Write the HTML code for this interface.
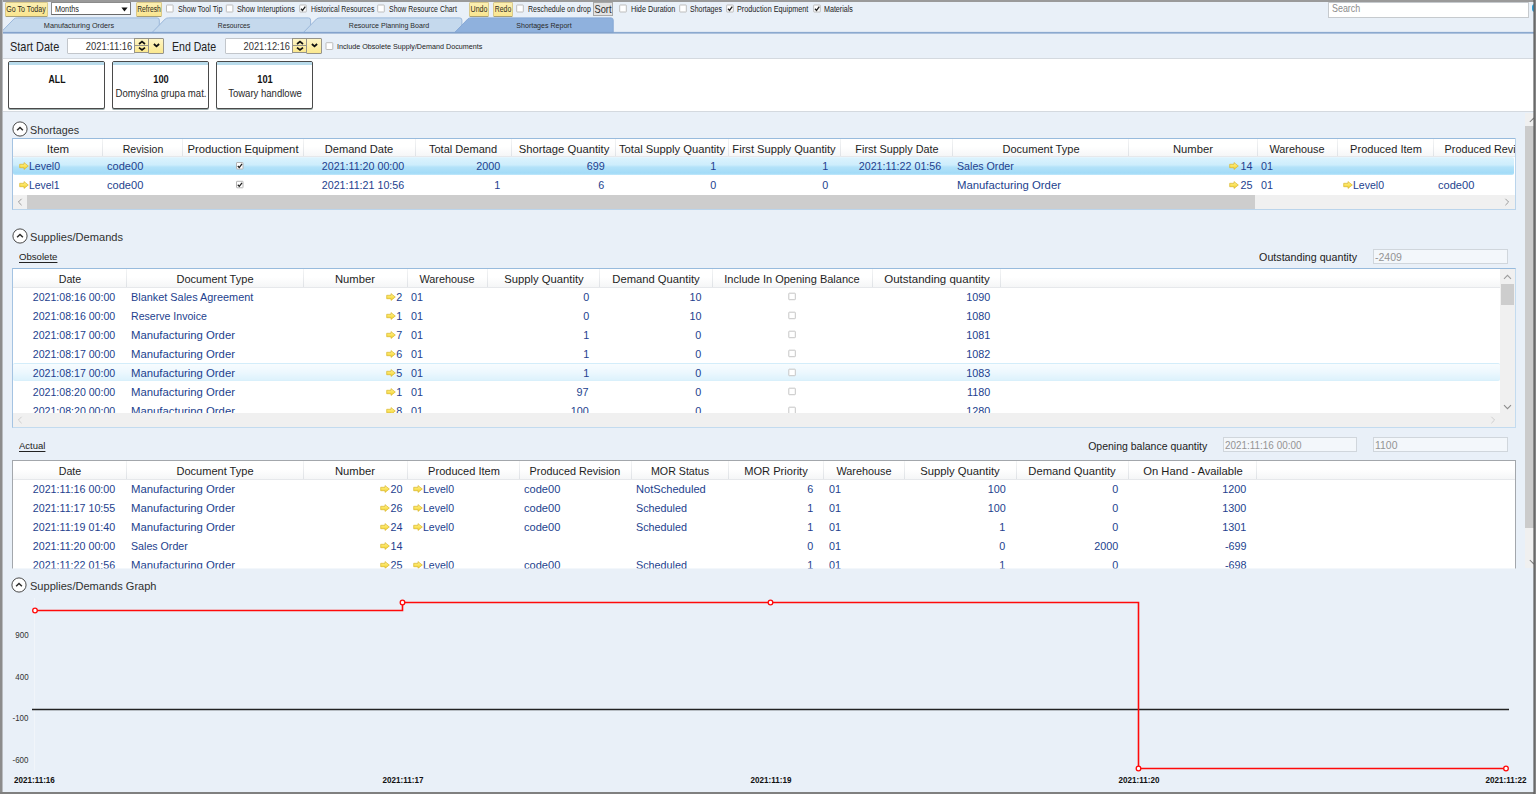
<!DOCTYPE html>
<html lang="en"><head><meta charset="utf-8"><title>Shortages Report</title>
<style>
html,body{margin:0;padding:0;background:#e9f0f8;}
body{width:1536px;height:794px;overflow:hidden;font-family:"Liberation Sans",sans-serif;}
#root{position:relative;width:1536px;height:794px;overflow:hidden;}
#root div,#root svg.ab,#root svg.ar{position:absolute;}
.t{position:absolute;white-space:nowrap;display:inline-block;line-height:16px;}
.cb{background:#fff;border:1px solid #b0b0b0;box-sizing:border-box;border-radius:1px;}
</style></head>
<body>
<div id="root">
<svg width="0" height="0" style="position:absolute"><defs><linearGradient id="ag" x1="0" y1="0" x2="0" y2="1"><stop offset="0" stop-color="#fff3a0"/><stop offset="0.5" stop-color="#fbe35a"/><stop offset="1" stop-color="#f1d03a"/></linearGradient></defs></svg>
<div style="left:2px;top:2px;width:1532px;height:790px;background:#e9f0f8;"></div>
<div style="left:5px;top:2px;width:42.5px;height:15.4px;background:linear-gradient(#fcefb2,#fae58e);border:1px solid #d9c98a;border-bottom-color:#a79f78;border-radius:1.5px;box-sizing:border-box;"></div>
<span class="t" style="top:1.2px;font-size:8.5px;color:#2e2c22;left:26.25px;transform:translateX(-50%) scaleX(0.830);">Go To Today</span>
<div style="left:51px;top:2px;width:80px;height:13px;background:#fff;border:1px solid #8c8c8c;border-right-color:#7a7a7a;border-bottom-color:#6a6a6a;border-bottom-width:1.5px;box-sizing:border-box;"></div>
<span class="t" style="top:1.6px;font-size:8.2px;color:#222;left:54.631px;transform-origin:0 50%;transform:scaleX(0.889);">Months</span>
<svg class="ab" style="left:121px;top:6.5px" width="7" height="5" viewBox="0 0 7 5"><path d="M0.4 0.6 H6.6 L3.5 4.4 Z" fill="#111"/></svg>
<div style="left:136px;top:2px;width:26px;height:15.4px;background:linear-gradient(#fcefb2,#fae58e);border:1px solid #d9c98a;border-bottom-color:#a79f78;border-radius:1.5px;box-sizing:border-box;"></div>
<span class="t" style="top:1.2px;font-size:8.5px;color:#2e2c22;left:149px;transform:translateX(-50%) scaleX(0.796);">Refresh</span>
<svg class="ab" style="left:166px;top:4px" width="9" height="10" viewBox="0 0 9 10"><rect x="0.5" y="1" width="6.6" height="7" rx="0.4" fill="#fff" stroke="#bdbdbd" stroke-width="1"/></svg>
<span class="t" style="top:1.3px;font-size:8.5px;color:#222;left:177.618px;transform-origin:0 50%;transform:scaleX(0.841);">Show Tool Tip</span>
<svg class="ab" style="left:225px;top:4px" width="10" height="10" viewBox="0 0 10 10"><rect x="1.3" y="1" width="6.6" height="7" rx="0.4" fill="#fff" stroke="#bdbdbd" stroke-width="1"/></svg>
<span class="t" style="top:1.3px;font-size:8.5px;color:#222;left:237.118px;transform-origin:0 50%;transform:scaleX(0.851);">Show Interuptions</span>
<svg class="ab" style="left:299px;top:4px" width="9" height="10" viewBox="0 0 9 10"><rect x="0.7" y="1" width="6.6" height="7" rx="0.4" fill="#fff" stroke="#bdbdbd" stroke-width="1"/><path d="M2.00 4.70 L3.52 6.40 L6.28 2.60" fill="none" stroke="#222" stroke-width="1.3"/></svg>
<span class="t" style="top:1.3px;font-size:8.5px;color:#222;left:310.618px;transform-origin:0 50%;transform:scaleX(0.813);">Historical Resources</span>
<svg class="ab" style="left:377px;top:4px" width="9" height="10" viewBox="0 0 9 10"><rect x="0.7" y="1" width="6.6" height="7" rx="0.4" fill="#fff" stroke="#bdbdbd" stroke-width="1"/></svg>
<span class="t" style="top:1.3px;font-size:8.5px;color:#222;left:388.618px;transform-origin:0 50%;transform:scaleX(0.816);">Show Resource Chart</span>
<div style="left:469px;top:2px;width:19.5px;height:15.4px;background:linear-gradient(#fcefb2,#fae58e);border:1px solid #d9c98a;border-bottom-color:#a79f78;border-radius:1.5px;box-sizing:border-box;"></div>
<span class="t" style="top:1.2px;font-size:8.5px;color:#2e2c22;left:478.75px;transform:translateX(-50%) scaleX(0.830);">Undo</span>
<div style="left:493.4px;top:2px;width:19.3px;height:15.4px;background:linear-gradient(#fcefb2,#fae58e);border:1px solid #d9c98a;border-bottom-color:#a79f78;border-radius:1.5px;box-sizing:border-box;"></div>
<span class="t" style="top:1.2px;font-size:8.5px;color:#2e2c22;left:503.05px;transform:translateX(-50%) scaleX(0.806);">Redo</span>
<svg class="ab" style="left:516px;top:4px" width="9" height="10" viewBox="0 0 9 10"><rect x="0.7" y="1" width="6.6" height="7" rx="0.4" fill="#fff" stroke="#bdbdbd" stroke-width="1"/></svg>
<span class="t" style="top:1.3px;font-size:8.5px;color:#222;left:527.617px;transform-origin:0 50%;transform:scaleX(0.826);">Reschedule on drop</span>
<div style="left:593px;top:2px;width:20px;height:14px;background:#e3e3e3;border:1px solid #a9a9a9;box-sizing:border-box;"></div>
<span class="t" style="top:2px;font-size:10.2px;color:#2c2c2c;left:603px;transform:translateX(-50%) scaleX(0.908);">Sort</span>
<svg class="ab" style="left:619px;top:4px" width="9" height="10" viewBox="0 0 9 10"><rect x="0.7" y="1" width="6.6" height="7" rx="0.4" fill="#fff" stroke="#bdbdbd" stroke-width="1"/></svg>
<span class="t" style="top:1.3px;font-size:8.5px;color:#222;left:630.617px;transform-origin:0 50%;transform:scaleX(0.854);">Hide Duration</span>
<svg class="ab" style="left:679px;top:4px" width="9" height="10" viewBox="0 0 9 10"><rect x="0.7" y="1" width="6.6" height="7" rx="0.4" fill="#fff" stroke="#bdbdbd" stroke-width="1"/></svg>
<span class="t" style="top:1.3px;font-size:8.5px;color:#222;left:690.117px;transform-origin:0 50%;transform:scaleX(0.823);">Shortages</span>
<svg class="ab" style="left:726px;top:4px" width="9" height="10" viewBox="0 0 9 10"><rect x="0.7" y="1" width="6.6" height="7" rx="0.4" fill="#fff" stroke="#bdbdbd" stroke-width="1"/><path d="M2.01 4.70 L3.53 6.40 L6.28 2.60" fill="none" stroke="#222" stroke-width="1.3"/></svg>
<span class="t" style="top:1.3px;font-size:8.5px;color:#222;left:737.117px;transform-origin:0 50%;transform:scaleX(0.853);">Production Equipment</span>
<svg class="ab" style="left:813px;top:4px" width="9" height="10" viewBox="0 0 9 10"><rect x="0.7" y="1" width="6.6" height="7" rx="0.4" fill="#fff" stroke="#bdbdbd" stroke-width="1"/><path d="M2.01 4.70 L3.53 6.40 L6.28 2.60" fill="none" stroke="#222" stroke-width="1.3"/></svg>
<span class="t" style="top:1.3px;font-size:8.5px;color:#222;left:824.117px;transform-origin:0 50%;transform:scaleX(0.838);">Materials</span>
<div style="left:1328px;top:2px;width:201px;height:15.7px;background:#fff;border:1px solid #c6cace;box-sizing:border-box;"></div>
<span class="t" style="top:1.2px;font-size:10.2px;color:#8c8c8c;left:1331.54px;transform-origin:0 50%;transform:scaleX(0.875);">Search</span>
<div style="left:1532px;top:4px;width:6px;height:8px;background:#2a9fd8;border-radius:4px;"></div>
<svg class="ab" style="left:0;top:17px" width="1536" height="17" viewBox="0 0 1536 17"><path d="M0.7 15.6 L13.9 2 Q15.1 0.9 17.3 0.9 H157.1 Q159.3 0.9 159.3 3.1 V15.6 Z" fill="#c5d9ed" stroke="#9ab7da" stroke-width="1"/><path d="M152 15.6 L165.2 2 Q166.4 0.9 168.6 0.9 H308.4 Q310.6 0.9 310.6 3.1 V15.6 Z" fill="#c5d9ed" stroke="#9ab7da" stroke-width="1"/><path d="M303.3 15.6 L316.5 2 Q317.7 0.9 319.9 0.9 H459.7 Q461.9 0.9 461.9 3.1 V15.6 Z" fill="#c5d9ed" stroke="#9ab7da" stroke-width="1"/><path d="M454.6 15.6 L467.8 2 Q469 0.9 471.2 0.9 H611 Q613.2 0.9 613.2 3.1 V15.6 Z" fill="#8fb1dd" stroke="#86a8d6" stroke-width="1"/><rect x="2" y="14.9" width="1532" height="1" fill="#7f9fc9"/><rect x="2" y="15.9" width="1532" height="0.9" fill="#9db6d6"/></svg>
<span class="t" style="top:17.5px;font-size:7.8px;color:#2a2a2a;left:78.5px;transform:translateX(-50%) scaleX(0.933);">Manufacturing Orders</span>
<span class="t" style="top:17.5px;font-size:7.8px;color:#2a2a2a;left:233.5px;transform:translateX(-50%) scaleX(0.868);">Resources</span>
<span class="t" style="top:17.5px;font-size:7.8px;color:#2a2a2a;left:388.5px;transform:translateX(-50%) scaleX(0.904);">Resource Planning Board</span>
<span class="t" style="top:17.5px;font-size:7.8px;color:#2a2a2a;left:544px;transform:translateX(-50%) scaleX(0.906);">Shortages Report</span>
<span class="t" style="top:38.7px;font-size:12.2px;color:#222;left:9.951px;transform-origin:0 50%;transform:scaleX(0.897);">Start Date</span>
<div style="left:67px;top:37.5px;width:68px;height:16px;background:#fff;border:1px solid #c2c6cb;box-sizing:border-box;border-radius:1px;"></div>
<span class="t" style="top:38.2px;font-size:10.6px;color:#333;right:1403.92px;transform-origin:100% 50%;transform:scaleX(0.890);">2021:11:16</span>
<div style="left:134px;top:38px;width:14.5px;height:15.2px;background:linear-gradient(#fff6c6,#fbe88e);border:1px solid #96948a;box-sizing:border-box;"></div>
<div style="left:134.5px;top:45px;width:13.5px;height:1px;background:#96948a;"></div>
<svg class="ab" style="left:137.5px;top:40px" width="8" height="12" viewBox="0 0 8 12"><path d="M1 4 L4 1.6 L7 4" fill="none" stroke="#111" stroke-width="1.7"/><path d="M1 7.6 L4 10 L7 7.6" fill="none" stroke="#111" stroke-width="1.7"/></svg>
<div style="left:148.2px;top:37.5px;width:15.5px;height:16px;background:linear-gradient(#fff6c6,#fbe88e);border:1px solid #96948a;box-sizing:border-box;border-radius:1px;"></div>
<svg class="ab" style="left:152.6px;top:43.4px" width="7" height="5" viewBox="0 0 7 5"><path d="M0.9 1 L3.5 3.4 L6.1 1" fill="none" stroke="#111" stroke-width="1.8"/></svg>
<span class="t" style="top:38.7px;font-size:12.2px;color:#222;left:171.951px;transform-origin:0 50%;transform:scaleX(0.867);">End Date</span>
<div style="left:225px;top:37.5px;width:68px;height:16px;background:#fff;border:1px solid #c2c6cb;box-sizing:border-box;border-radius:1px;"></div>
<span class="t" style="top:38.2px;font-size:10.6px;color:#333;right:1245.92px;transform-origin:100% 50%;transform:scaleX(0.876);">2021:12:16</span>
<div style="left:292px;top:38px;width:14.5px;height:15.2px;background:linear-gradient(#fff6c6,#fbe88e);border:1px solid #96948a;box-sizing:border-box;"></div>
<div style="left:292.5px;top:45px;width:13.5px;height:1px;background:#96948a;"></div>
<svg class="ab" style="left:295.5px;top:40px" width="8" height="12" viewBox="0 0 8 12"><path d="M1 4 L4 1.6 L7 4" fill="none" stroke="#111" stroke-width="1.7"/><path d="M1 7.6 L4 10 L7 7.6" fill="none" stroke="#111" stroke-width="1.7"/></svg>
<div style="left:306.2px;top:37.5px;width:15.5px;height:16px;background:linear-gradient(#fff6c6,#fbe88e);border:1px solid #96948a;box-sizing:border-box;border-radius:1px;"></div>
<svg class="ab" style="left:310.6px;top:43.4px" width="7" height="5" viewBox="0 0 7 5"><path d="M0.9 1 L3.5 3.4 L6.1 1" fill="none" stroke="#111" stroke-width="1.8"/></svg>
<svg class="ab" style="left:325px;top:42px" width="10" height="10" viewBox="0 0 10 10"><rect x="1" y="0.7" width="6.8" height="6.8" rx="0.4" fill="#fff" stroke="#bdbdbd" stroke-width="1"/></svg>
<span class="t" style="top:38.5px;font-size:8px;color:#222;left:336.64px;transform-origin:0 50%;transform:scaleX(0.898);">Include Obsolete Supply/Demand Documents</span>
<div style="left:2px;top:58px;width:1532px;height:54px;background:#fff;border-top:1px solid #d4d9df;border-bottom:1px solid #d4d9df;box-sizing:border-box;"></div>
<div style="left:8px;top:61px;width:97px;height:48px;background:#fff;border:1px solid #4a4a4a;border-radius:2px;box-sizing:border-box;box-shadow:0 1px 0 #9aa;overflow:hidden;"><div style="position:absolute;left:0;top:0;width:100%;height:3px;background:#b9dcec"></div></div>
<span class="t" style="top:71.5px;font-size:10.1px;color:#111;font-weight:bold;left:56.5px;transform:translateX(-50%) scaleX(0.859);">ALL</span>
<div style="left:112px;top:61px;width:97px;height:48px;background:#fff;border:1px solid #4a4a4a;border-radius:2px;box-sizing:border-box;box-shadow:0 1px 0 #9aa;overflow:hidden;"><div style="position:absolute;left:0;top:0;width:100%;height:3px;background:#b9dcec"></div></div>
<span class="t" style="top:71.5px;font-size:10.1px;color:#111;font-weight:bold;left:160.5px;transform:translateX(-50%) scaleX(0.918);">100</span>
<span class="t" style="top:85.9px;font-size:10px;color:#2a2a2a;left:160.5px;transform:translateX(-50%) scaleX(0.957);">Domyślna grupa mat.</span>
<div style="left:216px;top:61px;width:97px;height:48px;background:#fff;border:1px solid #4a4a4a;border-radius:2px;box-sizing:border-box;box-shadow:0 1px 0 #9aa;overflow:hidden;"><div style="position:absolute;left:0;top:0;width:100%;height:3px;background:#b9dcec"></div></div>
<span class="t" style="top:71.5px;font-size:10.1px;color:#111;font-weight:bold;left:264.5px;transform:translateX(-50%) scaleX(0.918);">101</span>
<span class="t" style="top:85.9px;font-size:10px;color:#2a2a2a;left:264.5px;transform:translateX(-50%) scaleX(0.954);">Towary handlowe</span>
<svg class="ab" style="left:11.6px;top:121.3px" width="16" height="16" viewBox="0 0 16 16"><circle cx="8" cy="8" r="7.1" fill="#fff" stroke="#4a4a4a" stroke-width="1"/><path d="M5.1 9.3 L8 6.5 L10.9 9.3" fill="none" stroke="#2a2a2a" stroke-width="1.5"/></svg>
<span class="t" style="top:121.8px;font-size:11.3px;color:#303030;left:30.2915px;transform-origin:0 50%;transform:scaleX(0.952);">Shortages</span>
<div style="left:12px;top:138px;width:1504px;height:72px;background:#fff;border:1px solid #98bbdd;border-left-color:#a4c3e2;border-right-color:#bad4eb;border-bottom-color:#bad4eb;box-sizing:border-box;"></div>
<div style="left:13px;top:139px;width:1502px;height:18px;background:linear-gradient(#ffffff 0%,#ffffff 45%,#f5f6f7 100%);border-bottom:1px solid #e6e8eb;box-sizing:border-box;"></div>
<div style="left:102px;top:139px;width:1px;height:17px;background:linear-gradient(#f3f4f5,#dfe2e6);"></div>
<span class="t" style="top:140.6px;font-size:11.3px;color:#1e1e1e;left:57.75px;transform:translateX(-50%) scaleX(1.015);">Item</span>
<div style="left:182px;top:139px;width:1px;height:17px;background:linear-gradient(#f3f4f5,#dfe2e6);"></div>
<span class="t" style="top:140.6px;font-size:11.3px;color:#1e1e1e;left:142.5px;transform:translateX(-50%) scaleX(0.935);">Revision</span>
<div style="left:302.5px;top:139px;width:1px;height:17px;background:linear-gradient(#f3f4f5,#dfe2e6);"></div>
<span class="t" style="top:140.6px;font-size:11.3px;color:#1e1e1e;left:242.75px;transform:translateX(-50%) scaleX(0.999);">Production Equipment</span>
<div style="left:414.5px;top:139px;width:1px;height:17px;background:linear-gradient(#f3f4f5,#dfe2e6);"></div>
<span class="t" style="top:140.6px;font-size:11.3px;color:#1e1e1e;left:359px;transform:translateX(-50%) scaleX(0.983);">Demand Date</span>
<div style="left:511px;top:139px;width:1px;height:17px;background:linear-gradient(#f3f4f5,#dfe2e6);"></div>
<span class="t" style="top:140.6px;font-size:11.3px;color:#1e1e1e;left:463.25px;transform:translateX(-50%) scaleX(0.979);">Total Demand</span>
<div style="left:615px;top:139px;width:1px;height:17px;background:linear-gradient(#f3f4f5,#dfe2e6);"></div>
<span class="t" style="top:140.6px;font-size:11.3px;color:#1e1e1e;left:563.5px;transform:translateX(-50%) scaleX(0.994);">Shortage Quantity</span>
<div style="left:727.5px;top:139px;width:1px;height:17px;background:linear-gradient(#f3f4f5,#dfe2e6);"></div>
<span class="t" style="top:140.6px;font-size:11.3px;color:#1e1e1e;left:671.75px;transform:translateX(-50%) scaleX(0.993);">Total Supply Quantity</span>
<div style="left:840px;top:139px;width:1px;height:17px;background:linear-gradient(#f3f4f5,#dfe2e6);"></div>
<span class="t" style="top:140.6px;font-size:11.3px;color:#1e1e1e;left:784.25px;transform:translateX(-50%) scaleX(0.985);">First Supply Quantity</span>
<div style="left:952px;top:139px;width:1px;height:17px;background:linear-gradient(#f3f4f5,#dfe2e6);"></div>
<span class="t" style="top:140.6px;font-size:11.3px;color:#1e1e1e;left:896.5px;transform:translateX(-50%) scaleX(0.961);">First Supply Date</span>
<div style="left:1128px;top:139px;width:1px;height:17px;background:linear-gradient(#f3f4f5,#dfe2e6);"></div>
<span class="t" style="top:140.6px;font-size:11.3px;color:#1e1e1e;left:1040.5px;transform:translateX(-50%) scaleX(0.977);">Document Type</span>
<div style="left:1256.5px;top:139px;width:1px;height:17px;background:linear-gradient(#f3f4f5,#dfe2e6);"></div>
<span class="t" style="top:140.6px;font-size:11.3px;color:#1e1e1e;left:1192.75px;transform:translateX(-50%) scaleX(0.996);">Number</span>
<div style="left:1337px;top:139px;width:1px;height:17px;background:linear-gradient(#f3f4f5,#dfe2e6);"></div>
<span class="t" style="top:140.6px;font-size:11.3px;color:#1e1e1e;left:1297.25px;transform:translateX(-50%) scaleX(0.961);">Warehouse</span>
<div style="left:1433px;top:139px;width:1px;height:17px;background:linear-gradient(#f3f4f5,#dfe2e6);"></div>
<span class="t" style="top:140.6px;font-size:11.3px;color:#1e1e1e;left:1385.5px;transform:translateX(-50%) scaleX(0.977);">Produced Item</span>
<div style="left:1546.5px;top:139px;width:1px;height:17px;background:linear-gradient(#f3f4f5,#dfe2e6);"></div>
<span class="t" style="top:140.6px;font-size:11.3px;color:#1e1e1e;left:1490.25px;transform:translateX(-50%) scaleX(0.957);">Produced Revision</span>
<div style="left:13px;top:157px;width:1501px;height:18px;background:linear-gradient(#e8f7fe 0%,#daf2fd 8%,#cdedfc 44%,#b3e2f9 56%,#a2dbf7 90%,#c2e8fa 100%);border-radius:2px;"></div>
<svg class="ar" style="left:19px;top:162px" width="10" height="8" viewBox="0 0 10 8"><path d="M0.7 2.3 H5 V0.6 L9.3 4 L5 7.4 V5.7 H0.7 Z" fill="url(#ag)" stroke="#d9b62a" stroke-width="0.7" stroke-linejoin="round"/></svg>
<span class="t" style="top:158.4px;font-size:11.3px;color:#233f8e;left:29.4915px;transform-origin:0 50%;transform:scaleX(0.931);">Level0</span>
<span class="t" style="top:158.4px;font-size:11.3px;color:#233f8e;left:106.992px;transform-origin:0 50%;transform:scaleX(0.980);">code00</span>
<svg class="ab" style="left:236px;top:162px" width="9" height="9" viewBox="0 0 9 9"><rect x="0.5" y="0.5" width="6.5" height="6.5" rx="0.4" fill="#fff" stroke="#b4b4b4" stroke-width="1"/><path d="M1.78 3.94 L3.28 5.53 L6.00 1.97" fill="none" stroke="#222" stroke-width="1.3"/></svg>
<span class="t" style="top:158.4px;font-size:11.3px;color:#233f8e;left:362.5px;transform:translateX(-50%) scaleX(0.947);">2021:11:20 00:00</span>
<span class="t" style="top:158.4px;font-size:11.3px;color:#233f8e;right:1035.69px;transform-origin:100% 50%;transform:scaleX(0.955);">2000</span>
<span class="t" style="top:158.4px;font-size:11.3px;color:#233f8e;right:931.491px;transform-origin:100% 50%;transform:scaleX(0.955);">699</span>
<span class="t" style="top:158.4px;font-size:11.3px;color:#233f8e;right:819.991px;transform-origin:100% 50%;transform:scaleX(0.955);">1</span>
<span class="t" style="top:158.4px;font-size:11.3px;color:#233f8e;right:707.491px;transform-origin:100% 50%;transform:scaleX(0.955);">1</span>
<span class="t" style="top:158.4px;font-size:11.3px;color:#233f8e;left:899.5px;transform:translateX(-50%) scaleX(0.947);">2021:11:22 01:56</span>
<span class="t" style="top:158.4px;font-size:11.3px;color:#233f8e;left:956.991px;transform-origin:0 50%;transform:scaleX(0.942);">Sales Order</span>
<span class="t" style="top:158.4px;font-size:11.3px;color:#233f8e;right:283.491px;transform-origin:100% 50%;transform:scaleX(0.955);">14</span>
<svg class="ar" style="left:1229.3px;top:162px" width="10" height="8" viewBox="0 0 10 8"><path d="M0.7 2.3 H5 V0.6 L9.3 4 L5 7.4 V5.7 H0.7 Z" fill="url(#ag)" stroke="#d9b62a" stroke-width="0.7" stroke-linejoin="round"/></svg>
<span class="t" style="top:158.4px;font-size:11.3px;color:#233f8e;left:1261.49px;transform-origin:0 50%;transform:scaleX(0.955);">01</span>
<svg class="ar" style="left:19px;top:180.8px" width="10" height="8" viewBox="0 0 10 8"><path d="M0.7 2.3 H5 V0.6 L9.3 4 L5 7.4 V5.7 H0.7 Z" fill="url(#ag)" stroke="#d9b62a" stroke-width="0.7" stroke-linejoin="round"/></svg>
<span class="t" style="top:177.2px;font-size:11.3px;color:#233f8e;left:29.4915px;transform-origin:0 50%;transform:scaleX(0.916);">Level1</span>
<span class="t" style="top:177.2px;font-size:11.3px;color:#233f8e;left:106.992px;transform-origin:0 50%;transform:scaleX(0.980);">code00</span>
<svg class="ab" style="left:236px;top:180px" width="9" height="10" viewBox="0 0 9 10"><rect x="0.5" y="1.3" width="6.5" height="6.5" rx="0.4" fill="#fff" stroke="#b4b4b4" stroke-width="1"/><path d="M1.78 4.74 L3.28 6.33 L6.00 2.77" fill="none" stroke="#222" stroke-width="1.3"/></svg>
<span class="t" style="top:177.2px;font-size:11.3px;color:#233f8e;left:362.5px;transform:translateX(-50%) scaleX(0.947);">2021:11:21 10:56</span>
<span class="t" style="top:177.2px;font-size:11.3px;color:#233f8e;right:1035.69px;transform-origin:100% 50%;transform:scaleX(0.955);">1</span>
<span class="t" style="top:177.2px;font-size:11.3px;color:#233f8e;right:931.491px;transform-origin:100% 50%;transform:scaleX(0.955);">6</span>
<span class="t" style="top:177.2px;font-size:11.3px;color:#233f8e;right:819.991px;transform-origin:100% 50%;transform:scaleX(0.955);">0</span>
<span class="t" style="top:177.2px;font-size:11.3px;color:#233f8e;right:707.491px;transform-origin:100% 50%;transform:scaleX(0.955);">0</span>
<span class="t" style="top:177.2px;font-size:11.3px;color:#233f8e;left:956.991px;transform-origin:0 50%;transform:scaleX(1.004);">Manufacturing Order</span>
<span class="t" style="top:177.2px;font-size:11.3px;color:#233f8e;right:283.491px;transform-origin:100% 50%;transform:scaleX(0.955);">25</span>
<svg class="ar" style="left:1229.3px;top:180.8px" width="10" height="8" viewBox="0 0 10 8"><path d="M0.7 2.3 H5 V0.6 L9.3 4 L5 7.4 V5.7 H0.7 Z" fill="url(#ag)" stroke="#d9b62a" stroke-width="0.7" stroke-linejoin="round"/></svg>
<span class="t" style="top:177.2px;font-size:11.3px;color:#233f8e;left:1261.49px;transform-origin:0 50%;transform:scaleX(0.955);">01</span>
<svg class="ar" style="left:1343px;top:180.8px" width="10" height="8" viewBox="0 0 10 8"><path d="M0.7 2.3 H5 V0.6 L9.3 4 L5 7.4 V5.7 H0.7 Z" fill="url(#ag)" stroke="#d9b62a" stroke-width="0.7" stroke-linejoin="round"/></svg>
<span class="t" style="top:177.2px;font-size:11.3px;color:#233f8e;left:1353.19px;transform-origin:0 50%;transform:scaleX(0.931);">Level0</span>
<span class="t" style="top:177.2px;font-size:11.3px;color:#233f8e;left:1438.19px;transform-origin:0 50%;transform:scaleX(0.980);">code00</span>
<div style="left:13px;top:195px;width:1502px;height:13.5px;background:#f0f0f0;"></div>
<div style="left:27px;top:195px;width:1228px;height:13.5px;background:#cdcdcd;"></div>
<svg class="ab" style="left:17px;top:197.5px" width="6" height="8" viewBox="0 0 6 8"><path d="M4.6 0.8 L1.4 4 L4.6 7.2" fill="none" stroke="#9a9a9a" stroke-width="1"/></svg>
<svg class="ab" style="left:1504px;top:197.5px" width="6" height="8" viewBox="0 0 6 8"><path d="M1.4 0.8 L4.6 4 L1.4 7.2" fill="none" stroke="#9a9a9a" stroke-width="1"/></svg>
<div style="left:1515px;top:138px;width:21px;height:72px;background:#e9f0f8;"></div>
<div style="left:1515px;top:138px;width:1px;height:72px;background:#bad4eb;"></div>
<svg class="ab" style="left:11.6px;top:228.3px" width="16" height="16" viewBox="0 0 16 16"><circle cx="8" cy="8" r="7.1" fill="#fff" stroke="#4a4a4a" stroke-width="1"/><path d="M5.1 9.3 L8 6.5 L10.9 9.3" fill="none" stroke="#2a2a2a" stroke-width="1.5"/></svg>
<span class="t" style="top:228.8px;font-size:11.3px;color:#303030;left:30.0915px;transform-origin:0 50%;transform:scaleX(0.981);">Supplies/Demands</span>
<span class="t" style="top:249px;font-size:9.4px;color:#222;left:19.077px;transform-origin:0 50%;transform:scaleX(1.024);text-decoration:underline;text-underline-offset:1.5px;text-decoration-thickness:0.8px;">Obsolete</span>
<span class="t" style="top:249.3px;font-size:10.7px;color:#222;right:178.518px;transform-origin:100% 50%;transform:scaleX(0.999);">Outstanding quantity</span>
<div style="left:1373px;top:249px;width:134.5px;height:15px;background:#f3f7fb;border:1px solid #d0d6dc;box-sizing:border-box;"></div>
<span class="t" style="top:249.1px;font-size:10.5px;color:#949494;left:1375.33px;transform-origin:0 50%;transform:scaleX(1.004);">-2409</span>
<div style="left:12px;top:268px;width:1504px;height:160px;background:#fff;border:1px solid #98bbdd;border-left-color:#a4c3e2;border-right-color:#c3dbef;border-bottom-color:#c3dbef;box-sizing:border-box;"></div>
<div style="left:13px;top:269px;width:1487px;height:19px;background:linear-gradient(#ffffff 0%,#ffffff 45%,#f5f6f7 100%);border-bottom:1px solid #e6e8eb;box-sizing:border-box;"></div>
<div style="left:125.8px;top:269px;width:1px;height:18px;background:linear-gradient(#f3f4f5,#dfe2e6);"></div>
<span class="t" style="top:271.3px;font-size:11.3px;color:#1e1e1e;left:69.65px;transform:translateX(-50%) scaleX(0.943);">Date</span>
<div style="left:302.5px;top:269px;width:1px;height:18px;background:linear-gradient(#f3f4f5,#dfe2e6);"></div>
<span class="t" style="top:271.3px;font-size:11.3px;color:#1e1e1e;left:214.65px;transform:translateX(-50%) scaleX(0.977);">Document Type</span>
<div style="left:406.8px;top:269px;width:1px;height:18px;background:linear-gradient(#f3f4f5,#dfe2e6);"></div>
<span class="t" style="top:271.3px;font-size:11.3px;color:#1e1e1e;left:355.15px;transform:translateX(-50%) scaleX(0.996);">Number</span>
<div style="left:487px;top:269px;width:1px;height:18px;background:linear-gradient(#f3f4f5,#dfe2e6);"></div>
<span class="t" style="top:271.3px;font-size:11.3px;color:#1e1e1e;left:447.4px;transform:translateX(-50%) scaleX(0.961);">Warehouse</span>
<div style="left:599.2px;top:269px;width:1px;height:18px;background:linear-gradient(#f3f4f5,#dfe2e6);"></div>
<span class="t" style="top:271.3px;font-size:11.3px;color:#1e1e1e;left:543.6px;transform:translateX(-50%) scaleX(0.997);">Supply Quantity</span>
<div style="left:711.5px;top:269px;width:1px;height:18px;background:linear-gradient(#f3f4f5,#dfe2e6);"></div>
<span class="t" style="top:271.3px;font-size:11.3px;color:#1e1e1e;left:655.85px;transform:translateX(-50%) scaleX(0.995);">Demand Quantity</span>
<div style="left:871.8px;top:269px;width:1px;height:18px;background:linear-gradient(#f3f4f5,#dfe2e6);"></div>
<span class="t" style="top:271.3px;font-size:11.3px;color:#1e1e1e;left:792.15px;transform:translateX(-50%) scaleX(0.976);">Include In Opening Balance</span>
<div style="left:1000.2px;top:269px;width:1px;height:18px;background:linear-gradient(#f3f4f5,#dfe2e6);"></div>
<span class="t" style="top:271.3px;font-size:11.3px;color:#1e1e1e;left:936.5px;transform:translateX(-50%) scaleX(1.018);">Outstanding quantity</span>
<div style="left:13px;top:363px;width:1487px;height:18.3px;background:linear-gradient(#f7fcfe 0%,#edf8fe 50%,#ddf2fc 100%);border-top:1px solid #d3edfa;border-bottom:1px solid #d9f0fb;border-radius:2px;box-sizing:border-box;"></div>
<span class="t" style="top:289px;font-size:11.3px;color:#233f8e;left:74px;transform:translateX(-50%) scaleX(0.938);">2021:08:16 00:00</span>
<span class="t" style="top:289px;font-size:11.3px;color:#233f8e;left:131.492px;transform-origin:0 50%;transform:scaleX(0.964);">Blanket Sales Agreement</span>
<span class="t" style="top:289px;font-size:11.3px;color:#233f8e;right:1133.49px;transform-origin:100% 50%;transform:scaleX(0.955);">2</span>
<svg class="ar" style="left:386px;top:292.6px" width="10" height="8" viewBox="0 0 10 8"><path d="M0.7 2.3 H5 V0.6 L9.3 4 L5 7.4 V5.7 H0.7 Z" fill="url(#ag)" stroke="#d9b62a" stroke-width="0.7" stroke-linejoin="round"/></svg>
<span class="t" style="top:289px;font-size:11.3px;color:#233f8e;left:411.491px;transform-origin:0 50%;transform:scaleX(0.955);">01</span>
<span class="t" style="top:289px;font-size:11.3px;color:#233f8e;right:946.991px;transform-origin:100% 50%;transform:scaleX(0.955);">0</span>
<span class="t" style="top:289px;font-size:11.3px;color:#233f8e;right:834.692px;transform-origin:100% 50%;transform:scaleX(0.955);">10</span>
<svg class="ab" style="left:788px;top:292px" width="9" height="10" viewBox="0 0 9 10"><rect x="0.8" y="1.2" width="6.5" height="6.5" rx="0.4" fill="#fff" stroke="#c6c6c6" stroke-width="1"/></svg>
<span class="t" style="top:289px;font-size:11.3px;color:#233f8e;right:546.192px;transform-origin:100% 50%;transform:scaleX(0.955);">1090</span>
<span class="t" style="top:308px;font-size:11.3px;color:#233f8e;left:74px;transform:translateX(-50%) scaleX(0.938);">2021:08:16 00:00</span>
<span class="t" style="top:308px;font-size:11.3px;color:#233f8e;left:131.492px;transform-origin:0 50%;transform:scaleX(0.936);">Reserve Invoice</span>
<span class="t" style="top:308px;font-size:11.3px;color:#233f8e;right:1133.49px;transform-origin:100% 50%;transform:scaleX(0.955);">1</span>
<svg class="ar" style="left:386px;top:311.6px" width="10" height="8" viewBox="0 0 10 8"><path d="M0.7 2.3 H5 V0.6 L9.3 4 L5 7.4 V5.7 H0.7 Z" fill="url(#ag)" stroke="#d9b62a" stroke-width="0.7" stroke-linejoin="round"/></svg>
<span class="t" style="top:308px;font-size:11.3px;color:#233f8e;left:411.491px;transform-origin:0 50%;transform:scaleX(0.955);">01</span>
<span class="t" style="top:308px;font-size:11.3px;color:#233f8e;right:946.991px;transform-origin:100% 50%;transform:scaleX(0.955);">0</span>
<span class="t" style="top:308px;font-size:11.3px;color:#233f8e;right:834.692px;transform-origin:100% 50%;transform:scaleX(0.955);">10</span>
<svg class="ab" style="left:788px;top:311px" width="9" height="10" viewBox="0 0 9 10"><rect x="0.8" y="1.2" width="6.5" height="6.5" rx="0.4" fill="#fff" stroke="#c6c6c6" stroke-width="1"/></svg>
<span class="t" style="top:308px;font-size:11.3px;color:#233f8e;right:546.192px;transform-origin:100% 50%;transform:scaleX(0.955);">1080</span>
<span class="t" style="top:327px;font-size:11.3px;color:#233f8e;left:74px;transform:translateX(-50%) scaleX(0.938);">2021:08:17 00:00</span>
<span class="t" style="top:327px;font-size:11.3px;color:#233f8e;left:131.492px;transform-origin:0 50%;transform:scaleX(1.004);">Manufacturing Order</span>
<span class="t" style="top:327px;font-size:11.3px;color:#233f8e;right:1133.49px;transform-origin:100% 50%;transform:scaleX(0.955);">7</span>
<svg class="ar" style="left:386px;top:330.6px" width="10" height="8" viewBox="0 0 10 8"><path d="M0.7 2.3 H5 V0.6 L9.3 4 L5 7.4 V5.7 H0.7 Z" fill="url(#ag)" stroke="#d9b62a" stroke-width="0.7" stroke-linejoin="round"/></svg>
<span class="t" style="top:327px;font-size:11.3px;color:#233f8e;left:411.491px;transform-origin:0 50%;transform:scaleX(0.955);">01</span>
<span class="t" style="top:327px;font-size:11.3px;color:#233f8e;right:946.991px;transform-origin:100% 50%;transform:scaleX(0.955);">1</span>
<span class="t" style="top:327px;font-size:11.3px;color:#233f8e;right:834.692px;transform-origin:100% 50%;transform:scaleX(0.955);">0</span>
<svg class="ab" style="left:788px;top:330px" width="9" height="10" viewBox="0 0 9 10"><rect x="0.8" y="1.2" width="6.5" height="6.5" rx="0.4" fill="#fff" stroke="#c6c6c6" stroke-width="1"/></svg>
<span class="t" style="top:327px;font-size:11.3px;color:#233f8e;right:546.192px;transform-origin:100% 50%;transform:scaleX(0.955);">1081</span>
<span class="t" style="top:346px;font-size:11.3px;color:#233f8e;left:74px;transform:translateX(-50%) scaleX(0.938);">2021:08:17 00:00</span>
<span class="t" style="top:346px;font-size:11.3px;color:#233f8e;left:131.492px;transform-origin:0 50%;transform:scaleX(1.004);">Manufacturing Order</span>
<span class="t" style="top:346px;font-size:11.3px;color:#233f8e;right:1133.49px;transform-origin:100% 50%;transform:scaleX(0.955);">6</span>
<svg class="ar" style="left:386px;top:349.6px" width="10" height="8" viewBox="0 0 10 8"><path d="M0.7 2.3 H5 V0.6 L9.3 4 L5 7.4 V5.7 H0.7 Z" fill="url(#ag)" stroke="#d9b62a" stroke-width="0.7" stroke-linejoin="round"/></svg>
<span class="t" style="top:346px;font-size:11.3px;color:#233f8e;left:411.491px;transform-origin:0 50%;transform:scaleX(0.955);">01</span>
<span class="t" style="top:346px;font-size:11.3px;color:#233f8e;right:946.991px;transform-origin:100% 50%;transform:scaleX(0.955);">1</span>
<span class="t" style="top:346px;font-size:11.3px;color:#233f8e;right:834.692px;transform-origin:100% 50%;transform:scaleX(0.955);">0</span>
<svg class="ab" style="left:788px;top:349px" width="9" height="10" viewBox="0 0 9 10"><rect x="0.8" y="1.2" width="6.5" height="6.5" rx="0.4" fill="#fff" stroke="#c6c6c6" stroke-width="1"/></svg>
<span class="t" style="top:346px;font-size:11.3px;color:#233f8e;right:546.192px;transform-origin:100% 50%;transform:scaleX(0.955);">1082</span>
<span class="t" style="top:365px;font-size:11.3px;color:#233f8e;left:74px;transform:translateX(-50%) scaleX(0.938);">2021:08:17 00:00</span>
<span class="t" style="top:365px;font-size:11.3px;color:#233f8e;left:131.492px;transform-origin:0 50%;transform:scaleX(1.004);">Manufacturing Order</span>
<span class="t" style="top:365px;font-size:11.3px;color:#233f8e;right:1133.49px;transform-origin:100% 50%;transform:scaleX(0.955);">5</span>
<svg class="ar" style="left:386px;top:368.6px" width="10" height="8" viewBox="0 0 10 8"><path d="M0.7 2.3 H5 V0.6 L9.3 4 L5 7.4 V5.7 H0.7 Z" fill="url(#ag)" stroke="#d9b62a" stroke-width="0.7" stroke-linejoin="round"/></svg>
<span class="t" style="top:365px;font-size:11.3px;color:#233f8e;left:411.491px;transform-origin:0 50%;transform:scaleX(0.955);">01</span>
<span class="t" style="top:365px;font-size:11.3px;color:#233f8e;right:946.991px;transform-origin:100% 50%;transform:scaleX(0.955);">1</span>
<span class="t" style="top:365px;font-size:11.3px;color:#233f8e;right:834.692px;transform-origin:100% 50%;transform:scaleX(0.955);">0</span>
<svg class="ab" style="left:788px;top:368px" width="9" height="10" viewBox="0 0 9 10"><rect x="0.8" y="1.2" width="6.5" height="6.5" rx="0.4" fill="#fff" stroke="#c6c6c6" stroke-width="1"/></svg>
<span class="t" style="top:365px;font-size:11.3px;color:#233f8e;right:546.192px;transform-origin:100% 50%;transform:scaleX(0.955);">1083</span>
<span class="t" style="top:384px;font-size:11.3px;color:#233f8e;left:74px;transform:translateX(-50%) scaleX(0.938);">2021:08:20 00:00</span>
<span class="t" style="top:384px;font-size:11.3px;color:#233f8e;left:131.492px;transform-origin:0 50%;transform:scaleX(1.004);">Manufacturing Order</span>
<span class="t" style="top:384px;font-size:11.3px;color:#233f8e;right:1133.49px;transform-origin:100% 50%;transform:scaleX(0.955);">1</span>
<svg class="ar" style="left:386px;top:387.6px" width="10" height="8" viewBox="0 0 10 8"><path d="M0.7 2.3 H5 V0.6 L9.3 4 L5 7.4 V5.7 H0.7 Z" fill="url(#ag)" stroke="#d9b62a" stroke-width="0.7" stroke-linejoin="round"/></svg>
<span class="t" style="top:384px;font-size:11.3px;color:#233f8e;left:411.491px;transform-origin:0 50%;transform:scaleX(0.955);">01</span>
<span class="t" style="top:384px;font-size:11.3px;color:#233f8e;right:946.991px;transform-origin:100% 50%;transform:scaleX(0.955);">97</span>
<span class="t" style="top:384px;font-size:11.3px;color:#233f8e;right:834.692px;transform-origin:100% 50%;transform:scaleX(0.955);">0</span>
<svg class="ab" style="left:788px;top:387px" width="9" height="10" viewBox="0 0 9 10"><rect x="0.8" y="1.2" width="6.5" height="6.5" rx="0.4" fill="#fff" stroke="#c6c6c6" stroke-width="1"/></svg>
<span class="t" style="top:384px;font-size:11.3px;color:#233f8e;right:546.192px;transform-origin:100% 50%;transform:scaleX(0.955);">1180</span>
<span class="t" style="top:403px;font-size:11.3px;color:#233f8e;left:74px;transform:translateX(-50%) scaleX(0.938);">2021:08:20 00:00</span>
<span class="t" style="top:403px;font-size:11.3px;color:#233f8e;left:131.492px;transform-origin:0 50%;transform:scaleX(1.004);">Manufacturing Order</span>
<span class="t" style="top:403px;font-size:11.3px;color:#233f8e;right:1133.49px;transform-origin:100% 50%;transform:scaleX(0.955);">8</span>
<svg class="ar" style="left:386px;top:406.6px" width="10" height="8" viewBox="0 0 10 8"><path d="M0.7 2.3 H5 V0.6 L9.3 4 L5 7.4 V5.7 H0.7 Z" fill="url(#ag)" stroke="#d9b62a" stroke-width="0.7" stroke-linejoin="round"/></svg>
<span class="t" style="top:403px;font-size:11.3px;color:#233f8e;left:411.491px;transform-origin:0 50%;transform:scaleX(0.955);">01</span>
<span class="t" style="top:403px;font-size:11.3px;color:#233f8e;right:946.991px;transform-origin:100% 50%;transform:scaleX(0.955);">100</span>
<span class="t" style="top:403px;font-size:11.3px;color:#233f8e;right:834.692px;transform-origin:100% 50%;transform:scaleX(0.955);">0</span>
<svg class="ab" style="left:788px;top:406px" width="9" height="10" viewBox="0 0 9 10"><rect x="0.8" y="1.2" width="6.5" height="6.5" rx="0.4" fill="#fff" stroke="#c6c6c6" stroke-width="1"/></svg>
<span class="t" style="top:403px;font-size:11.3px;color:#233f8e;right:546.192px;transform-origin:100% 50%;transform:scaleX(0.955);">1280</span>
<div style="left:13px;top:413px;width:1502px;height:14px;background:#f0f0f0;"></div>
<svg class="ab" style="left:17px;top:416px" width="6" height="8" viewBox="0 0 6 8"><path d="M4.6 0.8 L1.4 4 L4.6 7.2" fill="none" stroke="#cdcdcd" stroke-width="1"/></svg>
<svg class="ab" style="left:1490px;top:416.3px" width="6" height="8" viewBox="0 0 6 8"><path d="M1.4 0.8 L4.6 4 L1.4 7.2" fill="none" stroke="#cdcdcd" stroke-width="1"/></svg>
<div style="left:1500px;top:269px;width:15px;height:144px;background:#f0f0f0;"></div>
<div style="left:1501px;top:284px;width:13px;height:21px;background:#cdcdcd;"></div>
<svg class="ab" style="left:1503px;top:274px" width="9" height="6" viewBox="0 0 9 6"><path d="M1 4.8 L4.5 1.3 L8 4.8" fill="none" stroke="#9c9c9c" stroke-width="1.05"/></svg>
<svg class="ab" style="left:1503px;top:403.5px" width="9" height="6" viewBox="0 0 9 6"><path d="M1 1.2 L4.5 4.7 L8 1.2" fill="none" stroke="#8c8c8c" stroke-width="1.05"/></svg>
<span class="t" style="top:438px;font-size:9.4px;color:#222;left:19.077px;transform-origin:0 50%;transform:scaleX(1.014);text-decoration:underline;text-underline-offset:1.5px;text-decoration-thickness:0.8px;">Actual</span>
<span class="t" style="top:437.5px;font-size:10.7px;color:#222;right:329.019px;transform-origin:100% 50%;transform:scaleX(0.982);">Opening balance quantity</span>
<div style="left:1223px;top:437px;width:134px;height:15px;background:#f3f7fb;border:1px solid #d0d6dc;box-sizing:border-box;"></div>
<span class="t" style="top:437.1px;font-size:10.5px;color:#949494;left:1225.33px;transform-origin:0 50%;transform:scaleX(0.944);">2021:11:16 00:00</span>
<div style="left:1373px;top:437px;width:134.5px;height:15px;background:#f3f7fb;border:1px solid #d0d6dc;box-sizing:border-box;"></div>
<span class="t" style="top:437.1px;font-size:10.5px;color:#949494;left:1375.33px;transform-origin:0 50%;transform:scaleX(0.995);">1100</span>
<div style="left:12px;top:460px;width:1504px;height:120px;background:#fff;border:1px solid #a3a7ac;box-sizing:border-box;"></div>
<div style="left:13px;top:461px;width:1502px;height:19px;background:linear-gradient(#ffffff 0%,#ffffff 45%,#f5f6f7 100%);border-bottom:1px solid #e6e8eb;box-sizing:border-box;"></div>
<div style="left:125.8px;top:461px;width:1px;height:18px;background:linear-gradient(#f3f4f5,#dfe2e6);"></div>
<span class="t" style="top:463.3px;font-size:11.3px;color:#1e1e1e;left:69.65px;transform:translateX(-50%) scaleX(0.943);">Date</span>
<div style="left:302.5px;top:461px;width:1px;height:18px;background:linear-gradient(#f3f4f5,#dfe2e6);"></div>
<span class="t" style="top:463.3px;font-size:11.3px;color:#1e1e1e;left:214.65px;transform:translateX(-50%) scaleX(0.977);">Document Type</span>
<div style="left:407px;top:461px;width:1px;height:18px;background:linear-gradient(#f3f4f5,#dfe2e6);"></div>
<span class="t" style="top:463.3px;font-size:11.3px;color:#1e1e1e;left:355.25px;transform:translateX(-50%) scaleX(0.996);">Number</span>
<div style="left:519px;top:461px;width:1px;height:18px;background:linear-gradient(#f3f4f5,#dfe2e6);"></div>
<span class="t" style="top:463.3px;font-size:11.3px;color:#1e1e1e;left:463.5px;transform:translateX(-50%) scaleX(0.977);">Produced Item</span>
<div style="left:630.8px;top:461px;width:1px;height:18px;background:linear-gradient(#f3f4f5,#dfe2e6);"></div>
<span class="t" style="top:463.3px;font-size:11.3px;color:#1e1e1e;left:575.4px;transform:translateX(-50%) scaleX(0.957);">Produced Revision</span>
<div style="left:727.8px;top:461px;width:1px;height:18px;background:linear-gradient(#f3f4f5,#dfe2e6);"></div>
<span class="t" style="top:463.3px;font-size:11.3px;color:#1e1e1e;left:679.8px;transform:translateX(-50%) scaleX(0.943);">MOR Status</span>
<div style="left:823.3px;top:461px;width:1px;height:18px;background:linear-gradient(#f3f4f5,#dfe2e6);"></div>
<span class="t" style="top:463.3px;font-size:11.3px;color:#1e1e1e;left:776.05px;transform:translateX(-50%) scaleX(0.982);">MOR Priority</span>
<div style="left:904px;top:461px;width:1px;height:18px;background:linear-gradient(#f3f4f5,#dfe2e6);"></div>
<span class="t" style="top:463.3px;font-size:11.3px;color:#1e1e1e;left:864.15px;transform:translateX(-50%) scaleX(0.961);">Warehouse</span>
<div style="left:1015.8px;top:461px;width:1px;height:18px;background:linear-gradient(#f3f4f5,#dfe2e6);"></div>
<span class="t" style="top:463.3px;font-size:11.3px;color:#1e1e1e;left:960.4px;transform:translateX(-50%) scaleX(0.997);">Supply Quantity</span>
<div style="left:1127.8px;top:461px;width:1px;height:18px;background:linear-gradient(#f3f4f5,#dfe2e6);"></div>
<span class="t" style="top:463.3px;font-size:11.3px;color:#1e1e1e;left:1072.3px;transform:translateX(-50%) scaleX(0.995);">Demand Quantity</span>
<div style="left:1256.2px;top:461px;width:1px;height:18px;background:linear-gradient(#f3f4f5,#dfe2e6);"></div>
<span class="t" style="top:463.3px;font-size:11.3px;color:#1e1e1e;left:1192.5px;transform:translateX(-50%) scaleX(0.992);">On Hand - Available</span>
<span class="t" style="top:481px;font-size:11.3px;color:#233f8e;left:74px;transform:translateX(-50%) scaleX(0.947);">2021:11:16 00:00</span>
<span class="t" style="top:481px;font-size:11.3px;color:#233f8e;left:131.492px;transform-origin:0 50%;transform:scaleX(1.004);">Manufacturing Order</span>
<span class="t" style="top:481px;font-size:11.3px;color:#233f8e;right:1133.49px;transform-origin:100% 50%;transform:scaleX(0.955);">20</span>
<svg class="ar" style="left:380px;top:484.6px" width="10" height="8" viewBox="0 0 10 8"><path d="M0.7 2.3 H5 V0.6 L9.3 4 L5 7.4 V5.7 H0.7 Z" fill="url(#ag)" stroke="#d9b62a" stroke-width="0.7" stroke-linejoin="round"/></svg>
<svg class="ar" style="left:413px;top:484.6px" width="10" height="8" viewBox="0 0 10 8"><path d="M0.7 2.3 H5 V0.6 L9.3 4 L5 7.4 V5.7 H0.7 Z" fill="url(#ag)" stroke="#d9b62a" stroke-width="0.7" stroke-linejoin="round"/></svg>
<span class="t" style="top:481px;font-size:11.3px;color:#233f8e;left:423.191px;transform-origin:0 50%;transform:scaleX(0.931);">Level0</span>
<span class="t" style="top:481px;font-size:11.3px;color:#233f8e;left:524.491px;transform-origin:0 50%;transform:scaleX(0.980);">code00</span>
<span class="t" style="top:481px;font-size:11.3px;color:#233f8e;left:636.491px;transform-origin:0 50%;transform:scaleX(0.983);">NotScheduled</span>
<span class="t" style="top:481px;font-size:11.3px;color:#233f8e;right:722.491px;transform-origin:100% 50%;transform:scaleX(0.955);">6</span>
<span class="t" style="top:481px;font-size:11.3px;color:#233f8e;left:828.791px;transform-origin:0 50%;transform:scaleX(0.955);">01</span>
<span class="t" style="top:481px;font-size:11.3px;color:#233f8e;right:530.491px;transform-origin:100% 50%;transform:scaleX(0.955);">100</span>
<span class="t" style="top:481px;font-size:11.3px;color:#233f8e;right:417.991px;transform-origin:100% 50%;transform:scaleX(0.955);">0</span>
<span class="t" style="top:481px;font-size:11.3px;color:#233f8e;right:289.491px;transform-origin:100% 50%;transform:scaleX(0.955);">1200</span>
<span class="t" style="top:500px;font-size:11.3px;color:#233f8e;left:74px;transform:translateX(-50%) scaleX(0.947);">2021:11:17 10:55</span>
<span class="t" style="top:500px;font-size:11.3px;color:#233f8e;left:131.492px;transform-origin:0 50%;transform:scaleX(1.004);">Manufacturing Order</span>
<span class="t" style="top:500px;font-size:11.3px;color:#233f8e;right:1133.49px;transform-origin:100% 50%;transform:scaleX(0.955);">26</span>
<svg class="ar" style="left:380px;top:503.6px" width="10" height="8" viewBox="0 0 10 8"><path d="M0.7 2.3 H5 V0.6 L9.3 4 L5 7.4 V5.7 H0.7 Z" fill="url(#ag)" stroke="#d9b62a" stroke-width="0.7" stroke-linejoin="round"/></svg>
<svg class="ar" style="left:413px;top:503.6px" width="10" height="8" viewBox="0 0 10 8"><path d="M0.7 2.3 H5 V0.6 L9.3 4 L5 7.4 V5.7 H0.7 Z" fill="url(#ag)" stroke="#d9b62a" stroke-width="0.7" stroke-linejoin="round"/></svg>
<span class="t" style="top:500px;font-size:11.3px;color:#233f8e;left:423.191px;transform-origin:0 50%;transform:scaleX(0.931);">Level0</span>
<span class="t" style="top:500px;font-size:11.3px;color:#233f8e;left:524.491px;transform-origin:0 50%;transform:scaleX(0.980);">code00</span>
<span class="t" style="top:500px;font-size:11.3px;color:#233f8e;left:636.491px;transform-origin:0 50%;transform:scaleX(0.955);">Scheduled</span>
<span class="t" style="top:500px;font-size:11.3px;color:#233f8e;right:722.491px;transform-origin:100% 50%;transform:scaleX(0.955);">1</span>
<span class="t" style="top:500px;font-size:11.3px;color:#233f8e;left:828.791px;transform-origin:0 50%;transform:scaleX(0.955);">01</span>
<span class="t" style="top:500px;font-size:11.3px;color:#233f8e;right:530.491px;transform-origin:100% 50%;transform:scaleX(0.955);">100</span>
<span class="t" style="top:500px;font-size:11.3px;color:#233f8e;right:417.991px;transform-origin:100% 50%;transform:scaleX(0.955);">0</span>
<span class="t" style="top:500px;font-size:11.3px;color:#233f8e;right:289.491px;transform-origin:100% 50%;transform:scaleX(0.955);">1300</span>
<span class="t" style="top:519px;font-size:11.3px;color:#233f8e;left:74px;transform:translateX(-50%) scaleX(0.947);">2021:11:19 01:40</span>
<span class="t" style="top:519px;font-size:11.3px;color:#233f8e;left:131.492px;transform-origin:0 50%;transform:scaleX(1.004);">Manufacturing Order</span>
<span class="t" style="top:519px;font-size:11.3px;color:#233f8e;right:1133.49px;transform-origin:100% 50%;transform:scaleX(0.955);">24</span>
<svg class="ar" style="left:380px;top:522.6px" width="10" height="8" viewBox="0 0 10 8"><path d="M0.7 2.3 H5 V0.6 L9.3 4 L5 7.4 V5.7 H0.7 Z" fill="url(#ag)" stroke="#d9b62a" stroke-width="0.7" stroke-linejoin="round"/></svg>
<svg class="ar" style="left:413px;top:522.6px" width="10" height="8" viewBox="0 0 10 8"><path d="M0.7 2.3 H5 V0.6 L9.3 4 L5 7.4 V5.7 H0.7 Z" fill="url(#ag)" stroke="#d9b62a" stroke-width="0.7" stroke-linejoin="round"/></svg>
<span class="t" style="top:519px;font-size:11.3px;color:#233f8e;left:423.191px;transform-origin:0 50%;transform:scaleX(0.931);">Level0</span>
<span class="t" style="top:519px;font-size:11.3px;color:#233f8e;left:524.491px;transform-origin:0 50%;transform:scaleX(0.980);">code00</span>
<span class="t" style="top:519px;font-size:11.3px;color:#233f8e;left:636.491px;transform-origin:0 50%;transform:scaleX(0.955);">Scheduled</span>
<span class="t" style="top:519px;font-size:11.3px;color:#233f8e;right:722.491px;transform-origin:100% 50%;transform:scaleX(0.955);">1</span>
<span class="t" style="top:519px;font-size:11.3px;color:#233f8e;left:828.791px;transform-origin:0 50%;transform:scaleX(0.955);">01</span>
<span class="t" style="top:519px;font-size:11.3px;color:#233f8e;right:530.491px;transform-origin:100% 50%;transform:scaleX(0.955);">1</span>
<span class="t" style="top:519px;font-size:11.3px;color:#233f8e;right:417.991px;transform-origin:100% 50%;transform:scaleX(0.955);">0</span>
<span class="t" style="top:519px;font-size:11.3px;color:#233f8e;right:289.491px;transform-origin:100% 50%;transform:scaleX(0.955);">1301</span>
<span class="t" style="top:538px;font-size:11.3px;color:#233f8e;left:74px;transform:translateX(-50%) scaleX(0.947);">2021:11:20 00:00</span>
<span class="t" style="top:538px;font-size:11.3px;color:#233f8e;left:131.492px;transform-origin:0 50%;transform:scaleX(0.942);">Sales Order</span>
<span class="t" style="top:538px;font-size:11.3px;color:#233f8e;right:1133.49px;transform-origin:100% 50%;transform:scaleX(0.955);">14</span>
<svg class="ar" style="left:380px;top:541.6px" width="10" height="8" viewBox="0 0 10 8"><path d="M0.7 2.3 H5 V0.6 L9.3 4 L5 7.4 V5.7 H0.7 Z" fill="url(#ag)" stroke="#d9b62a" stroke-width="0.7" stroke-linejoin="round"/></svg>
<span class="t" style="top:538px;font-size:11.3px;color:#233f8e;right:722.491px;transform-origin:100% 50%;transform:scaleX(0.955);">0</span>
<span class="t" style="top:538px;font-size:11.3px;color:#233f8e;left:828.791px;transform-origin:0 50%;transform:scaleX(0.955);">01</span>
<span class="t" style="top:538px;font-size:11.3px;color:#233f8e;right:530.491px;transform-origin:100% 50%;transform:scaleX(0.955);">0</span>
<span class="t" style="top:538px;font-size:11.3px;color:#233f8e;right:417.991px;transform-origin:100% 50%;transform:scaleX(0.955);">2000</span>
<span class="t" style="top:538px;font-size:11.3px;color:#233f8e;right:289.491px;transform-origin:100% 50%;transform:scaleX(0.955);">-699</span>
<span class="t" style="top:557px;font-size:11.3px;color:#233f8e;left:74px;transform:translateX(-50%) scaleX(0.947);">2021:11:22 01:56</span>
<span class="t" style="top:557px;font-size:11.3px;color:#233f8e;left:131.492px;transform-origin:0 50%;transform:scaleX(1.004);">Manufacturing Order</span>
<span class="t" style="top:557px;font-size:11.3px;color:#233f8e;right:1133.49px;transform-origin:100% 50%;transform:scaleX(0.955);">25</span>
<svg class="ar" style="left:380px;top:560.6px" width="10" height="8" viewBox="0 0 10 8"><path d="M0.7 2.3 H5 V0.6 L9.3 4 L5 7.4 V5.7 H0.7 Z" fill="url(#ag)" stroke="#d9b62a" stroke-width="0.7" stroke-linejoin="round"/></svg>
<svg class="ar" style="left:413px;top:560.6px" width="10" height="8" viewBox="0 0 10 8"><path d="M0.7 2.3 H5 V0.6 L9.3 4 L5 7.4 V5.7 H0.7 Z" fill="url(#ag)" stroke="#d9b62a" stroke-width="0.7" stroke-linejoin="round"/></svg>
<span class="t" style="top:557px;font-size:11.3px;color:#233f8e;left:423.191px;transform-origin:0 50%;transform:scaleX(0.931);">Level0</span>
<span class="t" style="top:557px;font-size:11.3px;color:#233f8e;left:524.491px;transform-origin:0 50%;transform:scaleX(0.980);">code00</span>
<span class="t" style="top:557px;font-size:11.3px;color:#233f8e;left:636.491px;transform-origin:0 50%;transform:scaleX(0.955);">Scheduled</span>
<span class="t" style="top:557px;font-size:11.3px;color:#233f8e;right:722.491px;transform-origin:100% 50%;transform:scaleX(0.955);">1</span>
<span class="t" style="top:557px;font-size:11.3px;color:#233f8e;left:828.791px;transform-origin:0 50%;transform:scaleX(0.955);">01</span>
<span class="t" style="top:557px;font-size:11.3px;color:#233f8e;right:530.491px;transform-origin:100% 50%;transform:scaleX(0.955);">1</span>
<span class="t" style="top:557px;font-size:11.3px;color:#233f8e;right:417.991px;transform-origin:100% 50%;transform:scaleX(0.955);">0</span>
<span class="t" style="top:557px;font-size:11.3px;color:#233f8e;right:289.491px;transform-origin:100% 50%;transform:scaleX(0.955);">-698</span>
<div style="left:1524.5px;top:112.5px;width:12px;height:455.5px;background:#f0f0f0;"></div>
<div style="left:1525px;top:126px;width:12px;height:402px;background:#cbcbcb;"></div>
<svg class="ab" style="left:1528.5px;top:116.5px" width="9" height="6" viewBox="0 0 9 6"><path d="M0.8 5 L4.5 1.3 L8.2 5" fill="none" stroke="#7d7d7d" stroke-width="1.05"/></svg>
<svg class="ab" style="left:1528.5px;top:558.8px" width="9" height="6" viewBox="0 0 9 6"><path d="M0.8 1 L4.5 4.7 L8.2 1" fill="none" stroke="#7d7d7d" stroke-width="1.05"/></svg>
<div style="left:2px;top:568px;width:1532px;height:1px;background:rgba(233,240,248,0.55);"></div>
<div style="left:2px;top:569px;width:1532px;height:223px;background:#e9f0f8;"></div>
<div style="left:34px;top:598px;width:1px;height:173px;background:#f1f5fa;"></div>
<svg class="ab" style="left:11.4px;top:577.2px" width="16" height="16" viewBox="0 0 16 16"><circle cx="8" cy="8" r="7.1" fill="#fff" stroke="#4a4a4a" stroke-width="1"/><path d="M5.1 9.3 L8 6.5 L10.9 9.3" fill="none" stroke="#2a2a2a" stroke-width="1.5"/></svg>
<span class="t" style="top:578px;font-size:11.3px;color:#303030;left:30.0915px;transform-origin:0 50%;transform:scaleX(0.978);">Supplies/Demands Graph</span>
<svg class="ab" style="left:0;top:570px" width="1536" height="224" viewBox="0 570 1536 224"><line x1="32" y1="709.5" x2="1509" y2="709.5" stroke="#222" stroke-width="1.3"/><polyline points="35,610.5 402.5,610.5 402.5,602.5 1138.5,602.5 1138.5,768.5 1506,768.5" fill="none" stroke="#ff0a0a" stroke-width="1.6"/><circle cx="35" cy="610.5" r="2.3" fill="#fff" stroke="#ff0a0a" stroke-width="1.3"/><circle cx="402.5" cy="602.5" r="2.3" fill="#fff" stroke="#ff0a0a" stroke-width="1.3"/><circle cx="770.5" cy="602.5" r="2.3" fill="#fff" stroke="#ff0a0a" stroke-width="1.3"/><circle cx="1138.5" cy="768.5" r="2.3" fill="#fff" stroke="#ff0a0a" stroke-width="1.3"/><circle cx="1506" cy="768.5" r="2.3" fill="#fff" stroke="#ff0a0a" stroke-width="1.3"/></svg>
<span class="t" style="top:628.3px;font-size:8.2px;color:#333;right:1507.63px;transform-origin:100% 50%;transform:scaleX(0.978);">900</span>
<span class="t" style="top:669.5px;font-size:8.2px;color:#333;right:1507.63px;transform-origin:100% 50%;transform:scaleX(0.978);">400</span>
<span class="t" style="top:711px;font-size:8.2px;color:#333;right:1507.63px;transform-origin:100% 50%;transform:scaleX(0.968);">-100</span>
<span class="t" style="top:753px;font-size:8.2px;color:#333;right:1507.63px;transform-origin:100% 50%;transform:scaleX(0.968);">-600</span>
<span class="t" style="top:773px;font-size:8.2px;color:#111;font-weight:bold;left:14.131px;transform-origin:0 50%;transform:scaleX(0.986);">2021:11:16</span>
<span class="t" style="top:773px;font-size:8.2px;color:#111;font-weight:bold;left:402.5px;transform:translateX(-50%) scaleX(0.986);">2021:11:17</span>
<span class="t" style="top:773px;font-size:8.2px;color:#111;font-weight:bold;left:770.5px;transform:translateX(-50%) scaleX(0.986);">2021:11:19</span>
<span class="t" style="top:773px;font-size:8.2px;color:#111;font-weight:bold;left:1138.5px;transform:translateX(-50%) scaleX(0.986);">2021:11:20</span>
<span class="t" style="top:773px;font-size:8.2px;color:#111;font-weight:bold;right:9.631px;transform-origin:100% 50%;transform:scaleX(0.986);">2021:11:22</span>
<div style="left:0px;top:0px;width:1536px;height:2px;background:#9a9a9a;"></div>
<div style="left:0px;top:0px;width:2px;height:794px;background:#8c8c8c;"></div>
<div style="left:2px;top:0px;width:1px;height:794px;background:#b9bcc0;"></div>
<div style="left:0px;top:792px;width:1536px;height:2px;background:#808080;"></div>
<div style="left:1533px;top:0px;width:1px;height:794px;background:rgba(96,96,96,0.6);"></div>
<div style="left:1534px;top:0px;width:1px;height:794px;background:#6a6a6a;"></div>
<div style="left:1535px;top:0px;width:1px;height:794px;background:#858585;"></div>
</div>
</body></html>
